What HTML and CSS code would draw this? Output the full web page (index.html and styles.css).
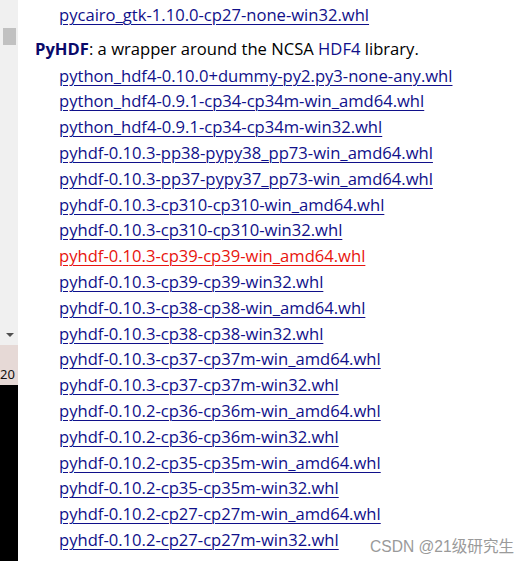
FILE: index.html
```html
<!DOCTYPE html>
<html lang="en">

<head>
  <meta charset="UTF-8">
  <meta name="viewport" content="width=device-width, initial-scale=1.0">
  <title>PyHDF</title>
  <link rel="stylesheet" href="styles.css">
</head>

<body>
  <div class="page">
    <div class="side">
      <div class="scroll">
        <div class="thumb"></div>
        <div class="arrow"></div>
      </div>
      <div class="num">20</div>
      <div class="dark"></div>
    </div>

    <div class="main">
      <ul class="files first">
        <li><a href="#">pycairo_gtk-1.10.0-cp27-none-win32.whl</a></li>
      </ul>
      <p class="pkg"><strong>PyHDF</strong>: a wrapper around the NCSA <span class="lib">HDF4</span> library.</p>
      <ul class="files">
        <li><a href="#">python_hdf4-0.10.0+dummy-py2.py3-none-any.whl</a></li>
        <li><a href="#">python_hdf4-0.9.1-cp34-cp34m-win_amd64.whl</a></li>
        <li><a href="#">python_hdf4-0.9.1-cp34-cp34m-win32.whl</a></li>
        <li><a href="#">pyhdf-0.10.3-pp38-pypy38_pp73-win_amd64.whl</a></li>
        <li><a href="#">pyhdf-0.10.3-pp37-pypy37_pp73-win_amd64.whl</a></li>
        <li><a href="#">pyhdf-0.10.3-cp310-cp310-win_amd64.whl</a></li>
        <li><a href="#">pyhdf-0.10.3-cp310-cp310-win32.whl</a></li>
        <li><a href="#" class="hot">pyhdf-0.10.3-cp39-cp39-win_amd64.whl</a></li>
        <li><a href="#">pyhdf-0.10.3-cp39-cp39-win32.whl</a></li>
        <li><a href="#">pyhdf-0.10.3-cp38-cp38-win_amd64.whl</a></li>
        <li><a href="#">pyhdf-0.10.3-cp38-cp38-win32.whl</a></li>
        <li><a href="#">pyhdf-0.10.3-cp37-cp37m-win_amd64.whl</a></li>
        <li><a href="#">pyhdf-0.10.3-cp37-cp37m-win32.whl</a></li>
        <li><a href="#">pyhdf-0.10.2-cp36-cp36m-win_amd64.whl</a></li>
        <li><a href="#">pyhdf-0.10.2-cp36-cp36m-win32.whl</a></li>
        <li><a href="#">pyhdf-0.10.2-cp35-cp35m-win_amd64.whl</a></li>
        <li><a href="#">pyhdf-0.10.2-cp35-cp35m-win32.whl</a></li>
        <li><a href="#">pyhdf-0.10.2-cp27-cp27m-win_amd64.whl</a></li>
        <li><a href="#">pyhdf-0.10.2-cp27-cp27m-win32.whl</a></li>
      </ul>
    </div>
  </div>

  <div class="mark">CSDN @21级研究生</div>
</body>

</html>
```

FILE: styles.css
```css
* {
  box-sizing: border-box;
}

html,
body {
  margin: 0;
  padding: 0;
  background: #fff;
}

body {
  font-family: "Open Sans", "Noto Sans", "Noto Sans CJK SC", sans-serif;
  font-size: 16.6px;
  color: #000;
}

.page {
  display: flex;
  height: 561px;
  overflow: hidden;
}

/* left strip */
.side {
  width: 18px;
  flex: none;
  display: flex;
  flex-direction: column;
}

.scroll {
  height: 345px;
  background: #f0f0f0;
  padding: 28px 2px 0 3px;
  display: flex;
  flex-direction: column;
  align-items: center;
}

.thumb {
  width: 13px;
  height: 17px;
  background: #c1c1c1;
}

.arrow {
  margin-top: auto;
  margin-bottom: 8px;
  width: 0;
  height: 0;
  border-left: 4px solid transparent;
  border-right: 4px solid transparent;
  border-top: 4px solid #505050;
}

.num {
  height: 40px;
  background: #e6d9d6;
  font-family: "Noto Sans", sans-serif;
  font-size: 13px;
  line-height: 16px;
  padding-top: 21px;
  color: #111;
  white-space: nowrap;
}

.dark {
  flex: 1;
  background: #000;
}

/* content */
.main {
  flex: 1;
  padding: 2px 0 0 17px;
}

ul,
li {
  margin: 0;
  padding: 0;
  list-style: none;
}

.files {
  padding-left: 24px;
}

.files li {
  height: 25.8px;
  line-height: 25.8px;
  white-space: nowrap;
}

.files a {
  color: #10108a;
  text-decoration: underline;
  text-decoration-thickness: 1px;
  text-underline-offset: 3px;
}

.files a.hot {
  color: #e8140e;
}

.pkg {
  margin: 8px 0 1px;
  line-height: 25.8px;
  white-space: nowrap;
}

.pkg strong {
  color: #0a0a6a;
}

.pkg .lib {
  color: #10108a;
}

.mark {
  position: absolute;
  left: 370px;
  top: 534px;
  font-family: "Liberation Sans", "Noto Sans CJK SC", sans-serif;
  font-size: 15.6px;
  color: #9a9a9a;
}
```
